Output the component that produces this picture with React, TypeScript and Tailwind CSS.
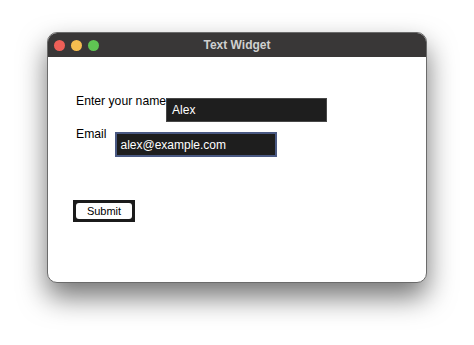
import React from "react";

export default function App() {
  const font = { fontFamily: '"Liberation Sans", Arial, sans-serif' };
  return (
    <div className="w-[474px] h-[345px] bg-white overflow-hidden" style={font}>
      <div className="ml-[47px] pt-[32px]">
        <div className="w-[380px] h-[251px] rounded-[10px] border border-[#6b6b6b] bg-white shadow-[0_14px_28px_rgba(0,0,0,0.55)] overflow-hidden flex flex-col">
          <div className="h-[24px] bg-[#393737] flex items-center relative">
            <div className="flex items-center gap-[6px] pl-[6px]">
              <span className="w-[11px] h-[11px] rounded-full bg-[#ee5f57]" />
              <span className="w-[11px] h-[11px] rounded-full bg-[#f5bd4f]" />
              <span className="w-[11px] h-[11px] rounded-full bg-[#5fc453]" />
            </div>
            <div className="absolute inset-0 flex items-center justify-center text-[12px] font-bold text-[#cfcfcf]">
              Text Widget
            </div>
          </div>
          <div className="flex-1 pl-[28px] pt-[37px]">
            <div className="flex items-start">
              <span className="text-[12.2px] leading-[14px] text-black">Enter your name</span>
              <div className="mt-[4px] w-[161px] h-[24px] bg-[#1e1e1e] border border-[#474747] flex items-center pl-[5px] text-[12px] text-white">
                Alex
              </div>
            </div>
            <div className="flex items-start mt-[5px]">
              <span className="text-[12.2px] leading-[14px] text-black">Email</span>
              <div className="ml-[9px] mt-[5px] w-[162px] h-[25px] bg-[#1e1e1e] border-2 border-[#4a5983] flex items-center pl-[3px] text-[12px] text-white">
                alex@example.com
              </div>
            </div>
            <div className="mt-[43px] -ml-[3px] w-[62px] h-[22px] bg-[#1b1b1b] p-[3px]">
              <div className="w-full h-full bg-white rounded-[3px] flex items-center justify-center text-[11px] text-black">
                Submit
              </div>
            </div>
          </div>
        </div>
      </div>
    </div>
  );
}
